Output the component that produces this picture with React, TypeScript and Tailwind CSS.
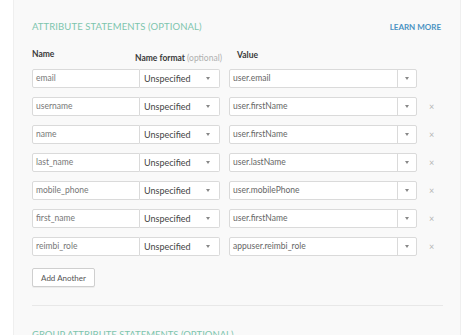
import React from 'react';

const rows = [
  { name: 'email', value: 'user.email', removable: false },
  { name: 'username', value: 'user.firstName', removable: true },
  { name: 'name', value: 'user.firstName', removable: true },
  { name: 'last_name', value: 'user.lastName', removable: true },
  { name: 'mobile_phone', value: 'user.mobilePhone', removable: true },
  { name: 'first_name', value: 'user.firstName', removable: true },
  { name: 'reimbi_role', value: 'appuser.reimbi_role', removable: true },
];

const Caret = () => (
  <svg width="4" height="3" viewBox="0 0 4 3" className="text-[#888]">
    <path d="M0 0h4L2 3z" fill="currentColor" />
  </svg>
);

const App = () => {
  return (
    <div className="w-[474px] h-[335px] overflow-hidden bg-white px-[13px] font-['Lato','Open_Sans',sans-serif]">
      <div className="h-full w-[448px] bg-[#f9f9f9] border-x border-[#efefef] pl-[18px] pr-[18px] pt-[21px]">
        {/* Header */}
        <div className="flex items-center justify-between h-[12px]">
          <span className="text-[9.5px] tracking-[0.1px] text-[#7dc5ae] uppercase">Attribute Statements (optional)</span>
          <span className="text-[8px] font-bold text-[#4a92c2] uppercase mr-[1px]">Learn More</span>
        </div>

        {/* Column labels */}
        <div className="flex mt-[14px] h-[20px] text-[#3a3a3a]">
          <div className="w-[103px] text-[8.5px] font-bold pt-[1px]">Name</div>
          <div className="w-[102px] text-[8.5px] font-bold pt-[5px]">
            Name format <span className="font-normal text-[#b0b0b0]">(optional)</span>
          </div>
          <div className="text-[8.5px] font-bold pt-[2px]">Value</div>
        </div>

        {/* Rows */}
        <div className="flex flex-col gap-[9px] mt-[2px]">
          {rows.map(r => (
            <div key={r.name} className="flex items-center h-[19px]">
              <div className="w-[108px] h-full bg-white border border-[#dadada] rounded-l-[2px] flex items-center px-[3px] text-[8.5px] text-[#777]">
                {r.name}
              </div>
              <div className="w-[80px] h-full bg-white border border-l-0 border-[#dadada] rounded-r-[2px] flex items-center justify-between pl-[4px] pr-[9px] text-[9px] text-[#444]">
                Unspecified
                <Caret />
              </div>
              <div className="ml-[9px] w-[188px] h-full bg-white border border-[#dadada] rounded-[2px] flex items-center text-[8.5px] text-[#666]">
                <div className="flex-1 px-[3px]">{r.value}</div>
                <div className="w-[19px] h-full border-l border-[#dadada] flex items-center justify-center">
                  <Caret />
                </div>
              </div>
              {r.removable && (
                <span className="ml-[12px] text-[9px] leading-none text-[#b5b5b5]">×</span>
              )}
            </div>
          ))}
        </div>

        {/* Add another */}
        <button className="mt-[12px] h-[19px] w-[63px] bg-white border border-[#cfcfcf] rounded-[2px] text-[8px] text-[#555] shadow-[0_1px_0_rgba(0,0,0,0.05)]">
          Add Another
        </button>

        <div className="mt-[18px] border-t border-[#e8e8e8] w-[411px]" />

        <div className="mt-[22px] text-[9.5px] text-[#7dc5ae] uppercase">Group Attribute Statements (optional)</div>
      </div>
    </div>
  );
};

export default App;
